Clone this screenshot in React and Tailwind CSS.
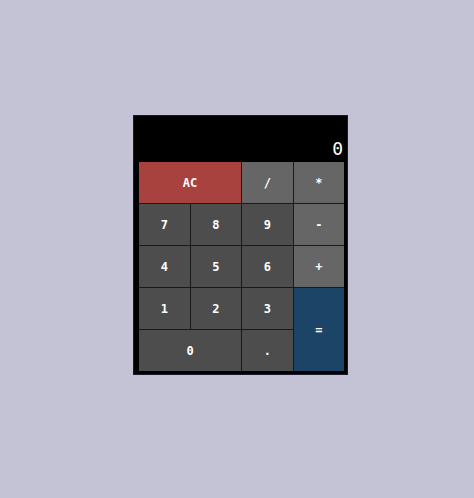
import React from 'react';

const keys = [
  { label: 'AC', span: 'col-span-2', bg: 'bg-[#a8423f]' },
  { label: '/', bg: 'bg-[#666666]' },
  { label: '*', bg: 'bg-[#666666]' },
  { label: '7' },
  { label: '8' },
  { label: '9' },
  { label: '-', bg: 'bg-[#666666]' },
  { label: '4' },
  { label: '5' },
  { label: '6' },
  { label: '+', bg: 'bg-[#666666]' },
  { label: '1' },
  { label: '2' },
  { label: '3' },
  { label: '=', span: 'row-span-2', bg: 'bg-[#1b4467]' },
  { label: '0', span: 'col-span-2' },
  { label: '.' },
];

const App = () => {
  return (
    <div className="min-h-[498px] w-full bg-[#c4c3d5] pt-[115px] pl-[133px]">
      <div className="w-[215px] border border-[#1a1a2e] bg-black pt-[5px] pl-[5px] pr-[3px] pb-[3px] font-['DejaVu_Sans_Mono',monospace]">
        <div className="h-[41px] flex items-end justify-end pr-[1px] pb-[4px] text-white text-[18px] leading-none">
          0
        </div>
        <div className="grid w-[205px] grid-cols-4 auto-rows-[41px] gap-px bg-[#1a1a1a]">
          {keys.map((k) => (
            <button
              key={k.label}
              className={`text-white text-[12px] font-bold flex items-center justify-center ${k.span || ''} ${k.bg || 'bg-[#4d4d4d]'}`}
            >
              {k.label}
            </button>
          ))}
        </div>
      </div>
    </div>
  );
};

export default App;
